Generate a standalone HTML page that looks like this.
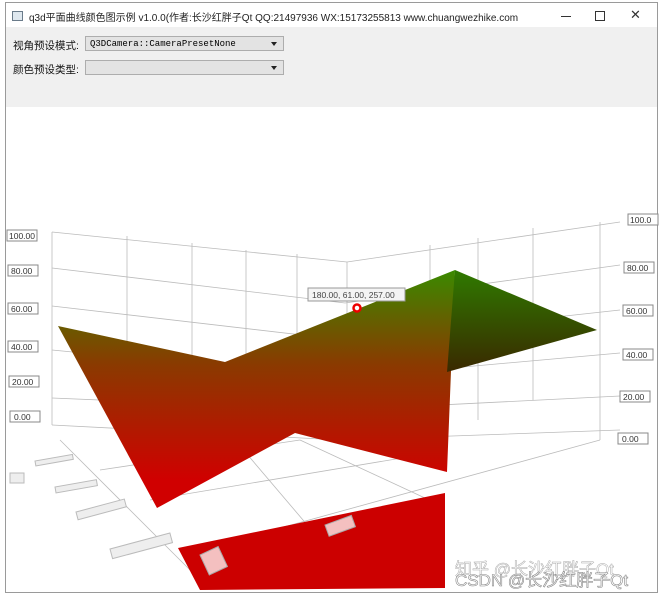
<!DOCTYPE html>
<html><head><meta charset="utf-8"><style>
body{margin:0;width:661px;height:600px;background:#fff;overflow:hidden;font-family:"Liberation Sans","Noto Sans CJK SC",sans-serif;}
.win{position:absolute;left:5px;top:2px;width:651px;height:589px;border:1px solid #9a9a9a;background:#fff;}
.title{position:absolute;left:0;top:0;width:651px;height:24px;background:#fff;font-size:10px;color:#222;white-space:nowrap;}
.tb{position:absolute;left:0;top:24px;width:651px;height:80px;background:#f0f0f0;}
.lbl{position:absolute;left:7px;font-size:10.5px;color:#111;}
.cb{position:absolute;left:79px;width:199px;height:15px;background:#e3e3e3;border:1px solid #adadad;font-family:"Liberation Mono",monospace;font-size:9px;line-height:15px;padding-left:4px;box-sizing:border-box;}
.cb:after{content:"";position:absolute;right:6px;top:5px;border:3.5px solid transparent;border-top:4px solid #222;}
</style></head><body>
<div class="win">
<div class="title">
<div style="position:absolute;left:6px;top:8px;width:9px;height:8px;border:1px solid #6a7b8a;background:#dfe8ef"></div>
<div style="position:absolute;left:23px;top:6px">q3d平面曲线颜色图示例 v1.0.0(作者:长沙红胖子Qt QQ:21497936 WX:15173255813 www.chuangwezhike.com</div>
<div style="position:absolute;left:555px;top:13px;width:10px;height:1px;background:#333"></div>
<div style="position:absolute;left:589px;top:8px;width:8px;height:8px;border:1px solid #333"></div>
<div style="position:absolute;left:624px;top:4px;font-size:13px;color:#333">✕</div>
</div>
<div class="tb">
<div class="lbl" style="top:11px">视角预设模式:</div>
<div class="cb" style="top:9px">Q3DCamera::CameraPresetNone</div>
<div class="lbl" style="top:35px">颜色预设类型:</div>
<div class="cb" style="top:33px"></div>
</div>
</div>
<svg width="661" height="600" style="position:absolute;left:0;top:0" font-family="Liberation Sans" font-size="8.5">
<defs>
<linearGradient id="g" x1="0" y1="270" x2="0" y2="480" gradientUnits="userSpaceOnUse">
<stop offset="0" stop-color="#3a8a00"/><stop offset="0.45" stop-color="#8a3a00"/><stop offset="1" stop-color="#d00000"/></linearGradient>
<linearGradient id="g2" x1="0" y1="270" x2="0" y2="370" gradientUnits="userSpaceOnUse">
<stop offset="0" stop-color="#2f7a00"/><stop offset="1" stop-color="#3a2a00"/></linearGradient>
</defs>
<g stroke="#bbb" stroke-width="0.8" fill="none">
<path d="M52 232 L347 262 L620 222"/><path d="M52 268 L345 303 L620 265"/><path d="M52 306 L345 340 L620 310"/>
<path d="M52 350 L340 378 L620 353"/><path d="M52 398 L340 410 L620 396"/><path d="M52 425 L340 440 L620 430"/>
<path d="M52 232 L52 425"/><path d="M127 236 L127 440"/><path d="M192 243 L192 420"/><path d="M246 250 L246 420"/><path d="M297 254 L297 420"/><path d="M347 262 L347 440"/>
<path d="M430 245 L430 420"/><path d="M478 238 L478 420"/><path d="M533 228 L533 400"/><path d="M600 222 L600 440"/>
<path d="M60 440 L200 580"/><path d="M235 440 L320 540"/><path d="M300 440 L440 505"/>
<path d="M100 470 L300 440"/><path d="M150 500 L420 455"/><path d="M200 550 L600 440"/>
</g>
<path d="M58 326 L225 362 L455 270 L447 472 L295 433 L157 508 Z" fill="url(#g)"/>
<path d="M455 270 L597 330 L447 372 Z" fill="url(#g2)"/>
<path d="M178 548 L445 493 L445 588 L200 590 Z" fill="#cc0000"/>
<circle cx="357" cy="308" r="3.5" fill="#fff" stroke="#e00" stroke-width="2.5"/>
<rect x="308" y="288" width="97" height="13" fill="#f4f4f4" stroke="#999"/>
<text x="312" y="298" fill="#444">180.00, 61.00, 257.00</text>
<g fill="#fff" stroke="#888">
<rect x="7" y="230" width="30" height="11"/><rect x="8" y="265" width="30" height="11"/><rect x="8" y="303" width="30" height="11"/><rect x="8" y="341" width="30" height="11"/><rect x="9" y="376" width="30" height="11"/><rect x="10" y="411" width="30" height="11"/>
<rect x="628" y="214" width="30" height="11"/><rect x="624" y="262" width="30" height="11"/><rect x="623" y="305" width="30" height="11"/><rect x="623" y="349" width="30" height="11"/><rect x="620" y="391" width="30" height="11"/><rect x="618" y="433" width="30" height="11"/>
</g>
<g fill="#333">
<text x="9" y="239">100.00</text><text x="11" y="274">80.00</text><text x="11" y="312">60.00</text><text x="11" y="350">40.00</text><text x="12" y="385">20.00</text><text x="14" y="420">0.00</text>
<text x="630" y="223">100.0</text><text x="627" y="271">80.00</text><text x="626" y="314">60.00</text><text x="626" y="358">40.00</text><text x="623" y="400">20.00</text><text x="622" y="442">0.00</text>
</g>
<g fill="#eee" stroke="#bbb">
<rect x="110" y="549" width="62" height="10" transform="rotate(-15 110 549)"/>
<rect x="76" y="512" width="50" height="8" transform="rotate(-15 76 512)"/>
<rect x="55" y="487" width="42" height="6" transform="rotate(-10 55 487)"/>
<rect x="10" y="473" width="14" height="10"/>
<rect x="35" y="461" width="38" height="5" transform="rotate(-10 35 461)"/>
</g>
<g fill="#f4c0c0" stroke="#aaa"><rect x="200" y="555" width="20" height="22" transform="rotate(-25 200 555)"/><rect x="325" y="525" width="28" height="12" transform="rotate(-20 325 525)"/></g>
<text x="455" y="575" font-size="17" fill="#fff" stroke="#aaa" stroke-width="0.5" font-family="Liberation Sans,Noto Sans CJK SC,sans-serif">知乎 @长沙红胖子Qt</text>
<text x="455" y="586" font-size="17" fill="#fff" stroke="#888" stroke-width="0.6" font-family="Liberation Sans,Noto Sans CJK SC,sans-serif">CSDN @长沙红胖子Qt</text>
</svg>
</body></html>
